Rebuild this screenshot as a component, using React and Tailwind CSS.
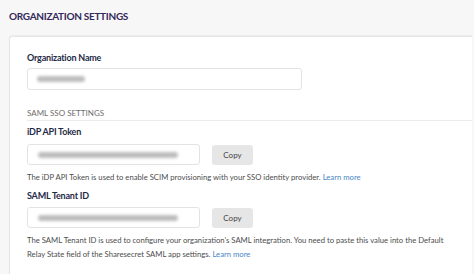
import React from "react";

const Blur = ({ w }) => (
  <div className={`h-[6px] rounded-sm bg-[#bdbdbd] blur-[1.5px] ${w}`} />
);

const App = () => {
  return (
    <div
      className="h-screen bg-[#f7f7f7] flex flex-col overflow-hidden"
      style={{ fontFamily: "Lato, 'Noto Sans', sans-serif" }}
    >
      <div className="h-[36px] shrink-0 flex items-center px-[9px] pb-[4px]">
        <h1 className="text-[10px] font-bold text-[#33295a] tracking-[-0.3px]">
          ORGANIZATION SETTINGS
        </h1>
      </div>
      <div className="flex-1 ml-[9px] mr-[2px] bg-white border-t border-l border-[#e6e6e6] rounded-tl-[3px] shadow-[0_-1px_1px_rgba(0,0,0,0.04)] pl-[17px] pt-[15px]">
        <p className="text-[9px] leading-[12px] font-bold text-[#1f2b47] tracking-[-0.2px]">Organization Name</p>
        <div className="mt-[4px] w-[275px] h-[22px] border border-[#e3e3e3] rounded-[3px] flex items-center pl-[9px]">
          <Blur w="w-[48px]" />
        </div>

        <div className="mt-[16px] h-[15px] border-b border-[#ebebeb] text-[8px] leading-[14px] text-[#6e6e6e]">
          SAML SSO SETTINGS
        </div>

        <p className="mt-[5px] text-[9px] leading-[12px] font-bold text-[#1f2b47] tracking-[-0.2px]">iDP API Token</p>
        <div className="mt-[6px] flex items-center gap-[12px]">
          <div className="w-[173px] h-[21px] border border-[#e3e3e3] rounded-[3px] flex items-center pl-[10px]">
            <Blur w="w-[140px]" />
          </div>
          <button className="w-[41px] h-[20px] bg-[#e6e6e6] rounded-[3px] text-[8px] text-[#444]">
            Copy
          </button>
        </div>
        <p className="mt-[5px] text-[7.7px] leading-[14px] text-[#4d4d4d]">
          The iDP API Token is used to enable SCIM provisioning with your SSO identity provider.{" "}
          <span className="text-[#4a86c5]">Learn more</span>
        </p>

        <p className="mt-[6px] text-[9px] leading-[12px] font-bold text-[#1f2b47] tracking-[-0.2px]">SAML Tenant ID</p>
        <div className="mt-[5px] flex items-center gap-[12px]">
          <div className="w-[173px] h-[21px] border border-[#e3e3e3] rounded-[3px] flex items-center pl-[10px]">
            <Blur w="w-[140px]" />
          </div>
          <button className="w-[41px] h-[20px] bg-[#e6e6e6] rounded-[3px] text-[8px] text-[#444]">
            Copy
          </button>
        </div>
        <p className="mt-[5px] w-[420px] text-[7.7px] leading-[14px] text-[#4d4d4d]">
          The SAML Tenant ID is used to configure your organization's SAML integration. You need to paste this value into the Default Relay State field of the Sharesecret SAML app settings.{" "}
          <span className="text-[#4a86c5]">Learn more</span>
        </p>
      </div>
    </div>
  );
};

export default App;
